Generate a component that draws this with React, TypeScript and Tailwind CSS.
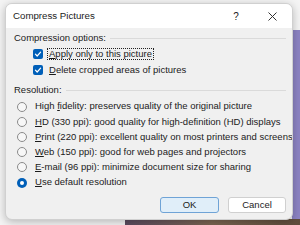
import React from 'react';

const font = { fontFamily: '"Segoe UI", "Liberation Sans", Arial, sans-serif' };

const Key = ({ children }: { children: React.ReactNode }) => <span className="underline underline-offset-[1px]">{children}</span>;

const CheckBox = () => (
  <span className="w-[10px] h-[10px] rounded-[2px] bg-[#005fb8] flex items-center justify-center shrink-0">
    <svg width="10" height="10" viewBox="0 0 10 10">
      <path d="M2.4 5.2 L4.2 7 L7.6 3.2" fill="none" stroke="white" strokeWidth="1.2" strokeLinecap="round" strokeLinejoin="round" />
    </svg>
  </span>
);

const Radio = ({ checked }: { checked?: boolean }) =>
  checked ? (
    <span className="w-[10px] h-[10px] rounded-full bg-[#005fb8] flex items-center justify-center shrink-0">
      <span className="w-[4px] h-[4px] rounded-full bg-white" />
    </span>
  ) : (
    <span className="w-[10px] h-[10px] rounded-full border border-[#8a8a8a] bg-[#f7f7f7] shrink-0" />
  );

const GroupHeader = ({ label }: { label: string }) => (
  <div className="h-[14px] flex items-center gap-[4px] pl-[8px] pr-[6px]">
    <span className="whitespace-nowrap">{label}</span>
    <span className="flex-1 h-px bg-[#dadada]" />
  </div>
);

const resolutions: { key: string; rest: string; pre?: string; checked?: boolean }[] = [
  { pre: 'High ', key: 'f', rest: 'idelity: preserves quality of the original picture' },
  { key: 'H', rest: 'D (330 ppi): good quality for high-definition (HD) displays' },
  { key: 'P', rest: 'rint (220 ppi): excellent quality on most printers and screens' },
  { key: 'W', rest: 'eb (150 ppi): good for web pages and projectors' },
  { key: 'E', rest: '-mail (96 ppi): minimize document size for sharing' },
  { key: 'U', rest: 'se default resolution', checked: true },
];

export default function App() {
  return (
    <div className="relative w-[300px] h-[225px] overflow-hidden bg-[#f4f4f4] pt-[3px] pl-[5px]" style={font}>
      <div className="absolute right-0 top-[30px] bottom-0 w-[8px] bg-[#8c83c3]" />
      <div className="absolute left-[125px] right-0 bottom-0 h-[6px] bg-gradient-to-r from-[#5b4a5e] via-[#7a6450] to-[#5f4c3c]" />

      <div className="relative w-[288px] h-[217px] rounded-[7px] overflow-hidden bg-[#f0f0f0] border border-[#d0d0d0] shadow-[0_2px_8px_rgba(0,0,0,0.25)] text-[9.5px] text-[#1b1b1b] flex flex-col">
        <div className="h-[24px] bg-white flex items-center pl-[7px] shrink-0">
          <span className="flex-1 text-[9.7px]">Compress Pictures</span>
          <span className="w-[10px] text-center text-[10px] mr-[27px]">?</span>
          <svg width="9" height="9" viewBox="0 0 9 9" className="mr-[15px]">
            <path d="M0.5 0.5 L8.5 8.5 M8.5 0.5 L0.5 8.5" stroke="#333" strokeWidth="1" />
          </svg>
        </div>

        <div className="flex flex-col pt-[3px]">
          <GroupHeader label="Compression options:" />
          <div className="mt-[1px] h-[16px] flex items-center pl-[27px] gap-[4px]">
            <CheckBox />
            <span className="border border-dotted border-[#222] px-[1px] leading-[10px] whitespace-nowrap">
              <Key>A</Key>pply only to this picture
            </span>
          </div>
          <div className="h-[16px] flex items-center pl-[27px] gap-[6px]">
            <CheckBox />
            <span className="whitespace-nowrap">
              <Key>D</Key>elete cropped areas of pictures
            </span>
          </div>

          <div className="mt-[5px]">
            <GroupHeader label="Resolution:" />
          </div>
          <div className="mt-[2px] flex flex-col">
            {resolutions.map((r) => (
              <div key={r.rest} className="h-[15.2px] flex items-center pl-[11px] gap-[8px]">
                <Radio checked={r.checked} />
                <span className="whitespace-nowrap">
                  {r.pre}
                  <Key>{r.key}</Key>
                  {r.rest}
                </span>
              </div>
            ))}
          </div>

          <div className="mt-[7px] flex justify-end gap-[9px] pr-[6px]">
            <button className="w-[59px] h-[16px] rounded-[3px] bg-[#e0eef9] border border-[#6fa3d6] text-[9.5px]">OK</button>
            <button className="w-[58px] h-[16px] rounded-[3px] bg-white border border-[#d0d0d0] text-[9.5px]">Cancel</button>
          </div>
        </div>
      </div>
    </div>
  );
}
